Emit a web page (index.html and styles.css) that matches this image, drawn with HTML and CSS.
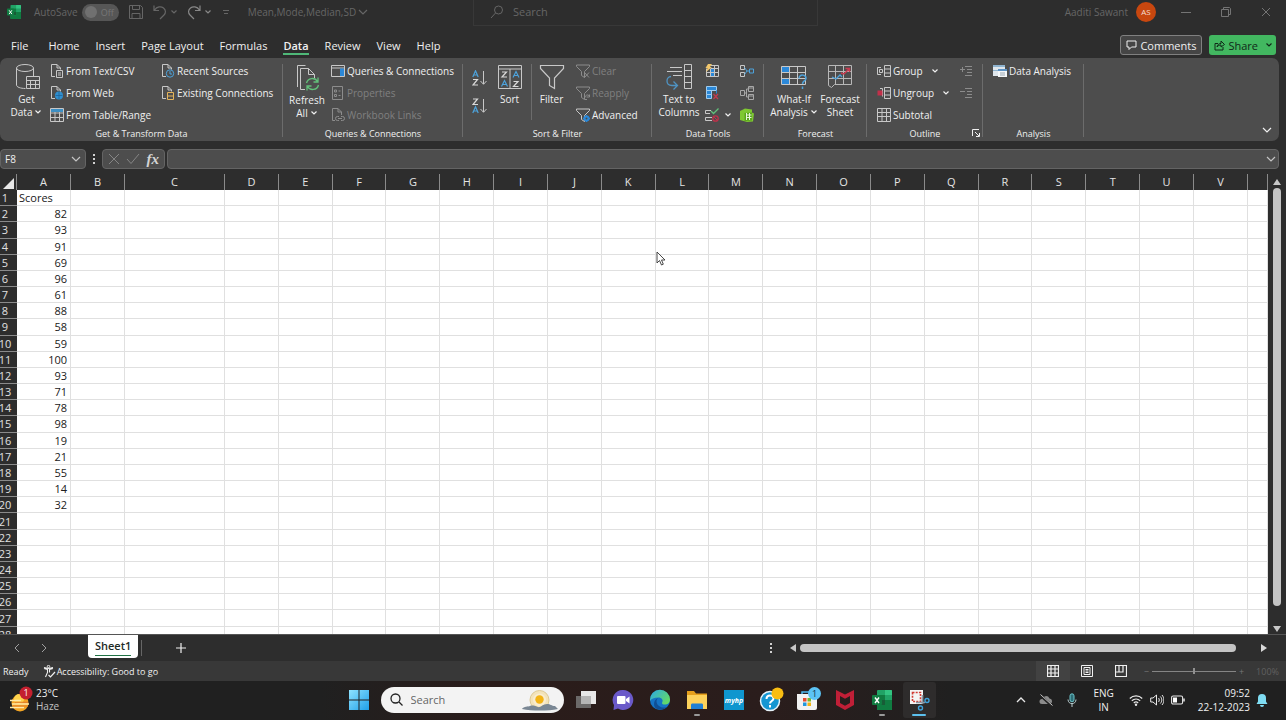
FILE: index.html
```html
<!DOCTYPE html>
<html lang="en">
<head>
<meta charset="utf-8">
<title>Mean,Mode,Median,SD - Excel</title>
<link rel="stylesheet" href="styles.css">
</head>
<body>
<svg class="defs" aria-hidden="true">
  <symbol id="chev" viewBox="0 0 8 8"><path d="M1.500 2.500 4 5l2.500-2.500" fill="none" stroke="currentColor" stroke-width="1.200"/></symbol>
  <symbol id="chev-lg" viewBox="0 0 10 10"><path d="M1 3l4 4 4-4" fill="none" stroke="currentColor" stroke-width="1.200"/></symbol>
  <symbol id="page" viewBox="0 0 14 14"><path d="M5 12.500H1.500v-12H7L10.500 4v1.500M7 .5V4h3.500" fill="none" stroke="#c8c8c8"/></symbol>
  <symbol id="funnel" viewBox="0 0 14 14"><path d="M.5 1h13v1.500L8.500 7.500v6l-3-2v-4L.5 2.500z" fill="none" stroke="currentColor"/></symbol>
  <symbol id="excel" viewBox="0 0 20 20"><path d="M6 0h13a1 1 0 0 1 1 1v18a1 1 0 0 1-1 1H6a1 1 0 0 1-1-1V1a1 1 0 0 1 1-1z" fill="#21a366"/><path d="M5 5h8v5H5z" fill="#107c41"/><path d="M13 0h6a1 1 0 0 1 1 1v4h-7z" fill="#33c481"/><path d="M5 10h8v5H5z" fill="#185c37"/><path d="M13 10h7v5h-7zM5 15h15v4a1 1 0 0 1-1 1H6a1 1 0 0 1-1-1z" fill="#107c41"/><rect y="5" width="10" height="10" rx="1" fill="#107c41"/><path d="M3 7.500l4 5.500M7 7.500L3 13" stroke="#fff" stroke-width="1.400"/></symbol>
</svg>

<header class="titlebar">
  <svg class="app-icon" viewBox="0 0 20 20"><use href="#excel"/></svg>
  <label class="autosave">AutoSave <input type="checkbox"><span class="switch">Off</span></label>
  <div class="quick">
    <button aria-label="Save"><svg width="16" height="16" viewBox="0 0 16 16"><path d="M1.500 1.500h11l2 2v11h-13zM4.500 1.500v4h7v-4M4 14.500V9.500h8v5" fill="none" stroke="currentColor"/></svg></button>
    <button aria-label="Undo"><svg width="16" height="16" viewBox="0 0 16 16"><path d="M2 1.500v5h5M2.500 6C5 2.500 9 2 11.500 4s2.500 5 .5 7l-4 4" fill="none" stroke="currentColor" stroke-width="1.200"/></svg><svg width="8" height="8"><use href="#chev"/></svg></button>
    <button class="redo" aria-label="Redo"><svg width="16" height="16" viewBox="0 0 16 16"><path d="M14 1.500v5H9M13.500 6C11 2.500 7 2 4.500 4s-2.500 5-.5 7l4 4" fill="none" stroke="currentColor" stroke-width="1.200"/></svg><svg width="8" height="8"><use href="#chev"/></svg></button>
    <button class="customize" aria-label="Customize"><svg width="8" height="8" viewBox="0 0 8 8"><path d="M1 2.500h6M2 5.500h4" stroke="currentColor"/></svg></button>
  </div>
  <button class="docname">Mean,Mode,Median,SD<svg width="10" height="10"><use href="#chev-lg"/></svg></button>
  <label class="title-search">
    <svg width="14" height="14" viewBox="0 0 14 14"><circle cx="8.500" cy="5" r="4" fill="none" stroke="currentColor"/><path d="M5.500 8L1 13" stroke="currentColor"/></svg>
    <input type="text" placeholder="Search" aria-label="Search">
  </label>
  <div class="account"><span>Aaditi Sawant</span><span class="avatar">AS</span></div>
  <div class="winbtns">
    <button aria-label="Minimize"><svg width="12" height="12" viewBox="0 0 12 12"><path d="M1 6.500h10" stroke="currentColor"/></svg></button>
    <button aria-label="Restore"><svg width="12" height="12" viewBox="0 0 12 12"><path d="M1.500 3.500h7v7h-7zM3.500 3.500v-2h6l1 1v6h-2" fill="none" stroke="currentColor"/></svg></button>
    <button aria-label="Close"><svg width="12" height="12" viewBox="0 0 12 12"><path d="M2 2l8 8M10 2l-8 8" stroke="currentColor"/></svg></button>
  </div>
</header>

<nav class="tabs">
  <a class="file" href="#">File</a><a href="#">Home</a><a href="#">Insert</a><a href="#">Page Layout</a><a href="#">Formulas</a><a class="active" href="#">Data</a><a href="#">Review</a><a href="#">View</a><a href="#">Help</a>
  <div class="tab-actions">
    <button class="comments"><svg width="11" height="11" viewBox="0 0 11 11"><path d="M1 1h9v6H5.500L3 9.500V7H1z" fill="none" stroke="currentColor"/></svg>Comments</button>
    <button class="share"><svg width="11" height="11" viewBox="0 0 11 11"><path d="M4 3.500H1v6.500h8V7M3 7c.5-2.500 2-3.500 4-3.500V1l3.500 3.500L7 7V5C5.500 5 4 5.500 3 7z" fill="none" stroke="currentColor"/></svg>Share<svg width="8" height="8"><use href="#chev"/></svg></button>
  </div>
</nav>

<section class="ribbon" aria-label="Data ribbon">
  <div class="group g-get">
    <div class="tools">
      <button class="big"><svg width="26" height="26" viewBox="0 0 26 26"><g fill="none" stroke="#c8c8c8"><ellipse cx="11" cy="4" rx="8.500" ry="3.500"/><path d="M2.500 4v17c0 2 4 3.500 9 3.500M19.500 4v8"/><path d="M12.500 12.500h13v12h-13zM12.500 16.500h13M12.500 20.500h13M16.500 16.500v8M21.500 16.500v8"/></g></svg><span>Get<br>Data<svg width="8" height="8"><use href="#chev"/></svg></span></button>
      <div class="stack">
        <button><svg width="14" height="14" viewBox="0 0 14 14"><use href="#page"/><path d="M6.500 6.500h6v7h-6zM8 9h3M8 11h3" fill="#4d4d4d" stroke="#c8c8c8"/></svg>From Text/CSV</button>
        <button><svg width="14" height="14" viewBox="0 0 14 14"><use href="#page"/><circle cx="9" cy="9.500" r="4" fill="#2f8fd0"/><path d="M5.500 9.500h7M9 6v7" stroke="#1d5f92" stroke-width=".7"/></svg>From Web</button>
        <button><svg width="14" height="14" viewBox="0 0 14 14"><path d="M.5.5h13v13H.5zM.5 5h13M.5 9.500h13M5 4v9.500M9.500 4v9.500" fill="none" stroke="#c8c8c8"/><path d="M1 1h12v3H1z" fill="#3d8fc4"/></svg>From Table/Range</button>
      </div>
      <div class="stack">
        <button><svg width="14" height="14" viewBox="0 0 14 14"><use href="#page"/><circle cx="9" cy="9.500" r="3.700" fill="#4d4d4d" stroke="#4da3dc"/><path d="M9 7v3h2" fill="none" stroke="#4da3dc"/></svg>Recent Sources</button>
        <button><svg width="14" height="14" viewBox="0 0 14 14"><use href="#page"/><path d="M6.500 6.500h6v7h-6zM6.500 10h6" fill="#4d4d4d" stroke="#e5b45b"/></svg>Existing Connections</button>
      </div>
    </div>
    <h2>Get &amp; Transform Data</h2>
  </div>

  <div class="group g-query">
    <div class="tools">
      <button class="big"><svg width="26" height="26" viewBox="0 0 26 26"><path d="M3.500 22V.5h8M6.500 24.500v-21h8l6 6V13M14.500 3.500v6h6M6.500 24.500H11" fill="none" stroke="#c8c8c8"/><path d="M12.500 18a6 6 0 0 1 11-1.500M24.500 20a6 6 0 0 1-11 1.500M24 12.500v4.500h-4.500M13 25.500V21h4.500" fill="none" stroke="#62c07a" stroke-width="1.300"/></svg><span>Refresh<br>All<svg width="8" height="8"><use href="#chev"/></svg></span></button>
      <div class="stack">
        <button><svg width="14" height="14" viewBox="0 0 14 14"><path d="M.5 1.500h13v11H.5zM.5 4h13" fill="none" stroke="#c8c8c8"/><path d="M9 4.500h4V12H9z" fill="#2b88d8"/></svg>Queries &amp; Connections</button>
        <button disabled><svg width="14" height="14" viewBox="0 0 14 14"><path d="M1.500.5h10v13h-10zM3.500 4h2v2h-2zM3.500 8.500h2v2h-2zM7.500 5h2M7.500 9.500h2" fill="none" stroke="currentColor"/></svg>Properties</button>
        <button disabled><svg width="14" height="14" viewBox="0 0 14 14"><path d="M4 12.500H1.500v-12H7L10.500 4v3M7 .5V4h3.500M8 8.500H6.500a2 2 0 0 0 0 4H8M10 8.500h1.500a2 2 0 0 1 0 4H10M7 10.500h4" fill="none" stroke="currentColor"/></svg>Workbook Links</button>
      </div>
    </div>
    <h2>Queries &amp; Connections</h2>
  </div>

  <div class="group g-sort">
    <div class="tools">
      <div class="stack az">
        <button aria-label="Sort A to Z"><svg width="16" height="16" viewBox="0 0 16 16"><path d="M.8 7L3.500.8 6.200 7M1.800 5h3.400" fill="none" stroke="#4da3dc" stroke-width="1.200"/><path d="M1 9.500h4.500L1 15h5" fill="none" stroke="#d8d8d8" stroke-width="1.200"/><path d="M11.500 1v13M8.500 11l3 3.300 3-3.300" fill="none" stroke="#c8c8c8"/></svg></button>
        <button aria-label="Sort Z to A"><svg width="16" height="16" viewBox="0 0 16 16"><path d="M1 1h4.500L1 6.500h5" fill="none" stroke="#d8d8d8" stroke-width="1.200"/><path d="M.8 15L3.500 8.800 6.200 15M1.800 13h3.400" fill="none" stroke="#4da3dc" stroke-width="1.200"/><path d="M11.500 1v13M8.500 11l3 3.300 3-3.300" fill="none" stroke="#c8c8c8"/></svg></button>
      </div>
      <button class="big"><svg width="26" height="26" viewBox="0 0 26 26"><path d="M1.500 1.500h23v23h-23zM1.500 5h23M13 5v19.500" fill="none" stroke="#c8c8c8"/><path d="M5 8h4.500L5 13h5M16.500 17.500h4.500l-4.500 5h5" fill="none" stroke="#d8d8d8" stroke-width="1.200"/><path d="M4.500 22.500l3-6 3 6M5.500 20.500h4M16 13.500l3-6 3 6M17 11.500h4" fill="none" stroke="#4da3dc" stroke-width="1.200"/></svg><span>Sort</span></button>
      <button class="big filter"><svg width="26" height="26" viewBox="0 0 26 26"><path d="M1.500 1.500h23v3L15.500 14v10.500l-5-3V14l-9-9.500z" fill="none" stroke="#c8c8c8" stroke-width="1.200"/></svg><span>Filter</span></button>
      <div class="stack">
        <button disabled><svg width="14" height="14" viewBox="0 0 14 14"><use href="#funnel"/><path d="M8.500 8.500l4.500 5M13 8.500l-4.500 5" stroke="currentColor"/></svg>Clear</button>
        <button disabled><svg width="14" height="14" viewBox="0 0 14 14"><use href="#funnel"/><path d="M13.500 8.500V11h-3M9 11.500A2.500 2.500 0 0 1 13 9.500M9 13.500h2" fill="none" stroke="currentColor"/></svg>Reapply</button>
        <button><svg class="lit" width="14" height="14" viewBox="0 0 14 14"><use href="#funnel"/><circle cx="10.500" cy="10.500" r="3" fill="#2b88d8"/><circle cx="10.500" cy="10.500" r="1" fill="#4d4d4d"/><path d="M10.500 7v1.500M10.500 12.500V14M7 10.500h1.500M12.500 10.500H14" stroke="#2b88d8" stroke-width="1.400"/></svg>Advanced</button>
      </div>
    </div>
    <h2>Sort &amp; Filter</h2>
  </div>

  <div class="group g-tools">
    <div class="tools">
      <button class="big"><svg width="28" height="26" viewBox="0 0 28 26"><path d="M19.500.5h7v24h-7zM19.500 6.500h7M19.500 12.500h7M19.500 18.500h7M5 3.500h12M2 7.500h15M8 11.500h9" fill="none" stroke="#c8c8c8"/><path d="M6 12.500c-5 0-6 9 1 9h5M8.500 17.500l4 4-4 4" fill="none" stroke="#4f93c2" stroke-width="1.300"/></svg><span>Text to<br>Columns</span></button>
      <div class="stack">
        <button aria-label="Flash Fill"><svg width="14" height="14" viewBox="0 0 14 14"><path d="M1.500 4.500v8h12v-11H6M1.500 8.500h12M5.500 4.500h8M5.500 5v7.500M9.500 1.500v11" fill="none" stroke="#c8c8c8"/><path d="M6 5h3v3H6zM6 9h3v3H6z" fill="#2b88d8"/><path d="M3 0h4L5 3h2L1 8l1.500-4H.5z" fill="#f0c66c"/></svg></button>
        <button aria-label="Remove Duplicates"><svg width="14" height="14" viewBox="0 0 14 14"><path d="M1.500.5h10v4h-10zM1.500 4.500h5v4h-5zM1.500 8.500h5v4h-5z" fill="#2b88d8" stroke="#9fcdf0"/><path d="M11.500 4.500v3" stroke="#2b88d8"/><path d="M8.500 8l4.500 5M13 8l-4.500 5" stroke="#c23a4e" stroke-width="1.300"/></svg></button>
        <button aria-label="Data Validation"><svg width="14" height="14" viewBox="0 0 14 14"><path d="M6 2.500H.5v3H5M7 9.500H.5v3H7" fill="none" stroke="#c8c8c8"/><path d="M6 3l2.500 2.500L13.500.5" fill="none" stroke="#62c07a" stroke-width="1.300"/><circle cx="10.500" cy="10.500" r="2.700" fill="none" stroke="#c2304a" stroke-width="1.300"/><path d="M8.700 8.700l3.600 3.600" stroke="#c2304a"/></svg><svg class="near-chev" width="8" height="8"><use href="#chev"/></svg></button>
      </div>
      <div class="stack">
        <button aria-label="Consolidate"><svg width="14" height="14" viewBox="0 0 14 14"><path d="M.5 1.500h4v4h-4zM.5 8.500h4v4h-4z" fill="none" stroke="#c8c8c8"/><path d="M4.500 3.500L7 7l-2.500 3.500M7 7h2.500" fill="none" stroke="#4da3dc"/><path d="M9.500 5h4v4h-4z" fill="none" stroke="#4da3dc"/></svg></button>
        <button aria-label="Relationships"><svg width="14" height="14" viewBox="0 0 14 14"><path d="M.5 4.500h4v5h-4zM8.500.5h5v5h-5zM8.500 8.500h5v5h-5zM4.500 7h2M6.500 3v8M6.500 3h2M6.500 11h2M8.500 2h5M8.500 10h5" fill="none" stroke="#a8a8a8"/></svg></button>
        <button aria-label="Manage Data Model"><svg width="14" height="14" viewBox="0 0 14 14"><path d="M0 3L5 .5l7 1v3l2 1-1 8-6 .5-7-2z" fill="#7fc832"/><path d="M4.500 5l7.500-.5v8L4.500 13z" fill="#5aa51e"/><path d="M6.500 5v7M6.500 7h5M6.500 9.500h5M9.500 5v7" stroke="#e8f6dc"/></svg></button>
      </div>
    </div>
    <h2>Data Tools</h2>
  </div>

  <div class="group g-forecast">
    <div class="tools">
      <button class="big"><svg width="26" height="26" viewBox="0 0 26 26"><path d="M.5 2.500h24v18H.5z" fill="none" stroke="#c8c8c8"/><path d="M1 3h7.500v5.500H1zM1 14.500h7.500V20H1z" fill="#2b88d8"/><path d="M.5 8.500h24M.5 14.500h24M8.500 2.500v18M16.500 2.500v18" stroke="#c8c8c8"/><path d="M18 14.500c0-5 7.500-4 7 0-.3 2.500-3.500 2.500-3.500 5.500M21.500 22.500V25" fill="none" stroke="#4da3dc" stroke-width="1.500"/></svg><span>What-If<br>Analysis<svg width="8" height="8"><use href="#chev"/></svg></span></button>
      <button class="big"><svg width="26" height="26" viewBox="0 0 26 26"><path d="M1.500 1.500h23v19h-17l-3 3-3-2zM1.500 7.500h23M1.500 14.500h23M8.500 1.500v19M16.500 1.500v19" fill="none" stroke="#b8b8b8"/><path d="M5 13l4 2 4-4 2 2" fill="none" stroke="#4da3dc" stroke-width="1.300"/><path d="M14 9l3 1 5-5M18.500 4.500H22.500V8" fill="none" stroke="#c93a50" stroke-width="1.500"/></svg><span>Forecast<br>Sheet</span></button>
    </div>
    <h2>Forecast</h2>
  </div>

  <div class="group g-outline">
    <div class="tools">
      <div class="stack">
        <button><svg width="14" height="14" viewBox="0 0 14 14"><path d="M7.500 1.500h6v11h-6zM7.500 5h6M7.500 9h6M4 3.500H.5v7H4M2.500 5.500h3v3h-3z" fill="none" stroke="#c8c8c8"/></svg>Group<svg class="gap-chev" width="8" height="8"><use href="#chev"/></svg></button>
        <button><svg width="14" height="14" viewBox="0 0 14 14"><path d="M7.500 1.500h6v11h-6zM7.500 5h6M7.500 9h6M3 2.500h2.500v8" fill="none" stroke="#c8c8c8"/><path d="M.5 4.500h5v5h-5z" fill="#c2304a"/></svg>Ungroup<svg class="gap-chev" width="8" height="8"><use href="#chev"/></svg></button>
        <button><svg width="14" height="14" viewBox="0 0 14 14"><path d="M.5.5h13v13H.5zM.5 4.500h13M.5 8.500h13M5 .5v13M9.500.5v13" fill="none" stroke="#c8c8c8"/></svg>Subtotal</button>
      </div>
      <div class="stack details">
        <button disabled aria-label="Show Detail"><svg width="12" height="12" viewBox="0 0 12 12"><path d="M5 1.500h7M7 4.500h5M7 7.500h5M5 10.500h7M0 4.500h5M2.500 2v5" stroke="currentColor"/></svg></button>
        <button disabled aria-label="Hide Detail"><svg width="12" height="12" viewBox="0 0 12 12"><path d="M5 1.500h7M7 4.500h5M7 7.500h5M5 10.500h7M0 4.500h5" stroke="currentColor"/></svg></button>
      </div>
    </div>
    <h2>Outline</h2>
    <button class="launcher" aria-label="Outline settings"><svg width="8" height="8" viewBox="0 0 8 8"><path d="M.5 7V.5H7M3 3l4 4M7.500 4v3.500H4" fill="none" stroke="currentColor"/></svg></button>
  </div>

  <div class="group g-analysis">
    <div class="tools"><div class="stack">
      <button><svg width="14" height="14" viewBox="0 0 14 14"><path d="M0 1h12v11H0z" fill="#dfe6ec"/><path d="M0 1h12v2H0zM0 6h5v1H0z" fill="#8eb3cf"/><path d="M5 5h9v8H5z" fill="#f4f6f8"/><path d="M5 5h9v2H5z" fill="#5b92c4"/><path d="M7 9h5M7 11h5" stroke="#9aa8b4"/></svg>Data Analysis</button>
    </div></div>
    <h2>Analysis</h2>
  </div>
  <button class="collapse" aria-label="Collapse ribbon"><svg width="10" height="10"><use href="#chev-lg"/></svg></button>
</section>

<div class="formula-row">
  <label class="namebox"><input type="text" value="F8" aria-label="Name box"><svg width="10" height="10"><use href="#chev-lg"/></svg></label>
  <svg class="dots" width="4" height="12" viewBox="0 0 4 12"><path d="M1 1h2v2H1zM1 5h2v2H1zM1 9h2v2H1z" fill="#d0d0d0"/></svg>
  <div class="fx">
    <button disabled aria-label="Cancel"><svg width="12" height="12" viewBox="0 0 12 12"><path d="M1 1l10 10M11 1L1 11" stroke="currentColor"/></svg></button>
    <button disabled aria-label="Enter"><svg width="14" height="12" viewBox="0 0 14 12"><path d="M1 6l4 4.500L13 1" fill="none" stroke="currentColor"/></svg></button>
    <button class="fn">fx</button>
  </div>
  <label class="formula"><input type="text" aria-label="Formula bar"><svg width="10" height="10"><use href="#chev-lg"/></svg></label>
</div>

<main class="sheet">
  <div class="viewport">
    <table>
      <colgroup id="cols"></colgroup>
      <thead><tr id="head"></tr></thead>
      <tbody id="rows"></tbody>
    </table>
  </div>
  <div class="vscroll">
    <svg width="10" height="10" viewBox="0 0 10 10"><path d="M5 2l4 6H1z" fill="#c8c8c8"/></svg>
    <div class="thumb"></div>
    <svg width="10" height="10" viewBox="0 0 10 10"><path d="M5 8L1 2h8z" fill="#c8c8c8"/></svg>
  </div>
  <svg class="cursor" width="10" height="15" viewBox="0 0 10 15"><path d="M1 1v11l2.500-2.500L5.500 14l1.800-.8L5.500 9H9z" fill="#fff" stroke="#333" stroke-width=".9"/></svg>
</main>

<div class="sheetbar">
  <div class="sheet-nav">
    <button aria-label="Previous sheet"><svg width="10" height="10" viewBox="0 0 10 10"><path d="M7 1L3 5l4 4" fill="none" stroke="currentColor"/></svg></button>
    <button aria-label="Next sheet"><svg width="10" height="10" viewBox="0 0 10 10"><path d="M3 1l4 4-4 4" fill="none" stroke="currentColor"/></svg></button>
  </div>
  <button class="sheet-tab"><span>Sheet1</span></button>
  <button class="add" aria-label="New sheet"><svg width="10" height="10" viewBox="0 0 10 10"><path d="M0 5h10M5 0v10" stroke="currentColor" stroke-width="1.200"/></svg></button>
  <div class="hscroll">
    <svg class="dots" width="4" height="12" viewBox="0 0 4 12"><path d="M1 1h2v2H1zM1 5h2v2H1zM1 9h2v2H1z" fill="#d0d0d0"/></svg>
    <svg width="8" height="10" viewBox="0 0 8 10"><path d="M1 5l6-4v8z" fill="#c8c8c8"/></svg>
    <div class="thumb"></div>
    <svg width="8" height="10" viewBox="0 0 8 10"><path d="M7 5L1 1v8z" fill="#d8d8d8"/></svg>
  </div>
</div>

<div class="status">
  <span>Ready</span>
  <button class="access"><svg width="13" height="13" viewBox="0 0 13 13"><path d="M1 3.500l3.500 1v3L2.500 12M10 3.500l-3.500 1v3M1 2.500l4.500 1L10 2.500" fill="none" stroke="currentColor" stroke-width="1.100"/><circle cx="5.500" cy="1.500" r="1.200" fill="none" stroke="currentColor"/><path d="M5.500 10l2 2L12 7" fill="none" stroke="currentColor" stroke-width="1.200"/></svg>Accessibility: Good to go</button>
  <div class="views">
    <button class="on" aria-label="Normal"><svg width="12" height="12" viewBox="0 0 12 12"><path d="M.5.5h11v11H.5zM.5 4h11M.5 8h11M4 .5v11M8 .5v11" fill="none" stroke="currentColor" stroke-width="1.200"/></svg></button>
    <button aria-label="Page Layout"><svg width="12" height="12" viewBox="0 0 12 12"><path d="M.5.5h11v11H.5zM3 2.500h6v7H3zM4.500 4.500h3M4.500 6h3M4.500 7.500h3" fill="none" stroke="currentColor"/></svg></button>
    <button aria-label="Page Break"><svg width="12" height="12" viewBox="0 0 12 12"><path d="M.5.5h11v11H.5zM4 .5V7M8 .5V7H.5" fill="none" stroke="currentColor" stroke-width="1.200"/></svg></button>
  </div>
  <label class="zoom"><span>−</span><input type="range" min="0" max="100" value="50" aria-label="Zoom"><span>+</span></label>
  <span class="pct">100%</span>
</div>

<footer class="taskbar">
  <div class="side">
    <button class="weather">
      <svg width="25" height="28" viewBox="0 0 25 28"><circle cx="11" cy="17" r="8.500" fill="#f5a623"/><circle cx="10" cy="13" r="5" fill="#ffd34d"/><path d="M1 14.500h11M3 18h17M1 21.500h14" stroke="#ffe9a8" stroke-width="1.500"/><path d="M6 16.300h13M4 20h15" stroke="#e07a2a"/><circle cx="17" cy="7" r="6.500" fill="#c4202f"/><text x="17" y="10" text-anchor="middle">1</text></svg>
      <span>23°C<br><small>Haze</small></span>
    </button>
  </div>
  <div class="apps">
    <button class="start" aria-label="Start"><svg width="20" height="20" viewBox="0 0 20 20"><defs><linearGradient id="w" x2="1" y2="1"><stop stop-color="#8fe3ff"/><stop offset="1" stop-color="#1e9fe8"/></linearGradient></defs><path d="M0 0h9.500v9.500H0zM10.500 0H20v9.500h-9.500zM0 10.500h9.500V20H0zM10.500 10.500H20V20h-9.500z" fill="url(#w)"/></svg></button>
    <label class="task-search"><svg width="13" height="13" viewBox="0 0 13 13"><circle cx="5.500" cy="5.500" r="4.500" fill="none" stroke="#222" stroke-width="1.300"/><path d="M9 9l3.500 3.500" stroke="#222" stroke-width="1.300"/></svg><input type="text" placeholder="Search" aria-label="Search Windows"><svg width="38" height="22" viewBox="0 0 38 22"><circle cx="18.500" cy="11" r="9.500" fill="#f3e3ba" stroke="#ddc995"/><circle cx="18.500" cy="11" r="6.500" fill="#f8ecd0"/><circle cx="18.500" cy="10.500" r="4.200" fill="#f3b417"/><path d="M1 20c2-3 6-2 8-3s6 0 8 1 5-3 9-3 4 2 8 2l3 3c-10 2-26 2-36 0z" fill="#7a8794"/></svg></label>
    <button aria-label="Task View"><svg width="22" height="22" viewBox="0 0 22 22"><path d="M6 2h15v13H6z" fill="#e8e8e8"/><path d="M1 7h15v12H1z" fill="#777" opacity=".85"/><path d="M6 7h10v8H6z" fill="#b5b5b5"/></svg></button>
    <button aria-label="Chat"><svg width="22" height="22" viewBox="0 0 22 22"><path d="M11 1a10 10 0 1 1-5 18.500L1.500 21 2 16A10 10 0 0 1 11 1z" fill="#6a59c9"/><rect x="5" y="7" width="8.500" height="8" rx="1" fill="#fff"/><path d="M14 10l3.500-2.500v7L14 12z" fill="#fff"/></svg></button>
    <button aria-label="Edge"><svg width="22" height="22" viewBox="0 0 22 22"><defs><linearGradient id="e1" x2="1" y2=".6"><stop stop-color="#2aa8e8"/><stop offset="1" stop-color="#62d968"/></linearGradient></defs><circle cx="11" cy="11" r="10" fill="#1573c4"/><path d="M1 11A10 10 0 0 1 21 10.500c0 4-3 5.500-6.500 5-2-.5-1.500-2-1-3 .7-1.500-1-4-4-4C5 8.500 2 10 1 12z" fill="url(#e1)"/><path d="M7.500 12c0 5 5 7.500 10.500 6.300A10 10 0 0 1 7 19.500C3.500 16 5 10.500 9 9c-1 1-1.500 2-1.500 3z" fill="#0f4f95"/></svg></button>
    <button class="run" aria-label="File Explorer"><svg width="22" height="22" viewBox="0 0 22 22"><path d="M1 2h7l2 2.500h11V8H1z" fill="#e59f1c"/><path d="M1 6h20v14H1z" fill="#fcd15b"/><path d="M5 20v-4c0-1 .5-1.500 1.500-1.500h9c1 0 1.500.5 1.500 1.500v4z" fill="#1f7fd4"/></svg></button>
    <button aria-label="myHP"><svg width="22" height="22" viewBox="0 0 22 22"><path d="M1 1h20v20H1z" fill="#0f96cf"/><text class="hp" x="11" y="14" text-anchor="middle">myhp</text></svg></button>
    <button aria-label="HP Support"><svg width="26" height="26" viewBox="0 0 26 26"><circle cx="12" cy="14" r="9.500" fill="#1596d2" stroke="#e8f4fa" stroke-width="1.500"/><path d="M8.500 12c0-5 7-4.500 7-.5 0 2.500-3.500 2.500-3.500 5M12 18v2.500" fill="none" stroke="#fff" stroke-width="2"/><circle cx="19.500" cy="6.500" r="6" fill="#f9bd12"/></svg></button>
    <button aria-label="Microsoft Store"><svg width="26" height="26" viewBox="0 0 26 26"><path d="M7 7V5h8v2" fill="none" stroke="#4db8ee" stroke-width="1.500"/><path d="M2 7h20v14a2 2 0 0 1-2 2H4a2 2 0 0 1-2-2z" fill="#f2f2f2"/><path d="M8 11h3.500v3.500H8z" fill="#e8492d"/><path d="M12.500 11H16v3.500h-3.500z" fill="#74b52c"/><path d="M8 15.500h3.500V19H8z" fill="#2196dc"/><path d="M12.500 15.500H16V19h-3.500z" fill="#f2b311"/><circle cx="19.500" cy="6.500" r="6.500" fill="#5cc3f5"/><text class="badge" x="19.500" y="10" text-anchor="middle">1</text></svg></button>
    <button aria-label="McAfee"><svg width="22" height="22" viewBox="0 0 22 22"><path d="M2 1l9 4.500L20 1v15l-9 5-9-5zM6 7v7l5 2.800 5-2.800V7l-5 2.800z" fill="#c01f37" fill-rule="evenodd"/></svg></button>
    <button class="run" aria-label="Excel"><svg width="20" height="20"><use href="#excel"/></svg></button>
    <button class="active" aria-label="Snipping Tool"><svg width="22" height="22" viewBox="0 0 22 22"><path d="M2 1h13v14H2z" fill="#f4f4f4"/><path d="M4.500 3.500h8v9h-8z" fill="none" stroke="#d13c35" stroke-width="1.600" stroke-dasharray="2 1.200"/><path d="M14.500 6v9M8 13.500h9" stroke="#8b98a5" stroke-width="1.700"/><circle cx="12.500" cy="19" r="2" fill="none" stroke="#3fa3dd" stroke-width="1.400"/><circle cx="19" cy="11.500" r="2" fill="none" stroke="#3fa3dd" stroke-width="1.400"/></svg></button>
  </div>
  <div class="side tray">
    <button aria-label="Hidden icons"><svg width="10" height="10" viewBox="0 0 10 10"><path d="M1 7l4-4 4 4" fill="none" stroke="#e8e8e8" stroke-width="1.300"/></svg></button>
    <button aria-label="OneDrive"><svg width="14" height="14" viewBox="0 0 14 14"><path d="M3 11a2.500 2.500 0 0 1 0-5 4 4 0 0 1 7.500-.5A2.800 2.800 0 0 1 11 11z" fill="#8c8c8c"/><path d="M1 2l12 11" stroke="#222" stroke-width="2.500"/><path d="M1.500 1.500l12 11" stroke="#c8c8c8"/></svg></button>
    <button aria-label="Microphone"><svg width="12" height="14" viewBox="0 0 12 14"><rect x="4" y=".8" width="4" height="8" rx="2" fill="#2d6f77" stroke="#6fc5cc"/><path d="M2 6.500c0 5.500 8 5.500 8 0M6 10.500V14" fill="none" stroke="#b8cdd0"/></svg></button>
    <button class="lang">ENG<br>IN</button>
    <button class="net" aria-label="Network, sound and battery">
      <svg width="14" height="14" viewBox="0 0 14 14"><path d="M.8 5.500c3.500-3.500 9-3.500 12.400 0M2.800 7.800c2.500-2.400 6-2.400 8.400 0M4.800 10c1.300-1.200 3.100-1.200 4.400 0" fill="none" stroke="#e8e8e8" stroke-width="1.200"/><circle cx="7" cy="11.800" r="1.200" fill="#e8e8e8"/></svg>
      <svg width="14" height="14" viewBox="0 0 14 14"><path d="M.7 5v4H3l3.500 3V2L3 5zM8.500 5c1 1 1 3 0 4M10.300 3.500c2 2 2 5 0 7M12 2c2.500 3 2.500 7 0 10" fill="none" stroke="#e8e8e8"/></svg>
      <svg width="14" height="14" viewBox="0 0 14 14"><rect x=".6" y="3" width="11" height="8" rx="1.500" fill="none" stroke="#e8e8e8" stroke-width="1.100"/><path d="M2 4.500h4v5H2z" fill="#fff"/><path d="M13 5.500v3" stroke="#e8e8e8" stroke-width="1.500"/></svg>
    </button>
    <button class="clock">09:52<br>22-12-2023</button>
    <button class="bell" aria-label="Notifications"><svg width="12" height="14" viewBox="0 0 12 14"><path d="M6 1a4 4 0 0 1 4 4v3.500L11.500 11H.5L2 8.500V5a4 4 0 0 1 4-4zM4 12h4a2 2 0 0 1-4 0z" fill="#7fdcf2"/></svg></button>
  </div>
</footer>
<script src="sheet.js"></script>
</body>
</html>
```

FILE: styles.css
```css
* { box-sizing: border-box; }

body {
  margin: 0;
  height: 100vh;
  display: flex;
  flex-direction: column;
  overflow: hidden;
  background: #2d2d2d;
  color: #f0f0f0;
  font: 10px/13px "Open Sans", "Noto Sans", sans-serif;
}

button, input {
  margin: 0;
  padding: 0;
  border: 0;
  background: none;
  color: inherit;
  font: inherit;
}
button { display: flex; align-items: center; white-space: nowrap; }
svg { flex: none; display: block; }
.defs { position: absolute; width: 0; height: 0; }

/* Title bar */
.titlebar {
  position: relative;
  display: flex;
  align-items: center;
  height: 26px;
  padding: 0 14px 2px 7px;
  color: #666;
  flex: none;
}
.app-icon { width: 14px; height: 14px; margin-right: 13px; }
.autosave { display: flex; align-items: center; gap: 4px; }
.autosave input { position: absolute; opacity: 0; }
.switch {
  display: flex;
  align-items: center;
  width: 37px;
  height: 17px;
  border-radius: 9px;
  background: #565656;
  color: #767676;
  font-size: 9px;
}
.switch::before {
  content: "";
  width: 12px;
  height: 12px;
  margin: 0 4px 0 3px;
  border-radius: 50%;
  background: #707070;
}
.quick { display: flex; gap: 8px; margin-left: 9px; }
.quick button { gap: 2px; }
.quick .redo { color: #888; }
.quick .customize { margin-left: 2px; }
.docname { gap: 2px; margin-left: 18px; }
.title-search {
  position: absolute;
  left: 473px;
  right: 468px;
  top: 0;
  height: 26px;
  display: flex;
  align-items: center;
  gap: 9px;
  padding: 0 16px 2px;
  border: 1px solid #383838;
  border-top: 0;
}
.title-search input { flex: 1; min-width: 0; font-size: 11px; }
::placeholder { color: inherit; opacity: 1; }
.account { display: flex; align-items: center; gap: 8px; margin-left: auto; }
.avatar {
  width: 20px;
  height: 20px;
  border-radius: 50%;
  background: #c8470f;
  color: #f5ded2;
  font-size: 8px;
  line-height: 20px;
  text-align: center;
}
.winbtns { display: flex; gap: 28px; margin-left: 24px; color: #747474; }

/* Ribbon tabs */
.tabs {
  display: flex;
  align-items: center;
  gap: 16px;
  height: 32px;
  padding: 6px 10px 0 11px;
  font-size: 11px;
  flex: none;
}
.tabs a {
  color: inherit;
  text-decoration: none;
  line-height: 15px;
  border-bottom: 2px solid transparent;
  margin-top: 2px;
}
.tabs .file { margin-right: 4px; }
.tabs .active { font-weight: 600; border-color: #4fb878; }
.tab-actions { display: flex; gap: 7px; margin-left: auto; }
.tab-actions button { height: 20px; padding: 0 5px; gap: 3px; border-radius: 3px; }
.comments { border: 1px solid #808080; background: #454545; }
.tab-actions .share { background: #42b760; color: #102818; padding-right: 3px; }
.share svg:last-child { margin-left: 4px; }

/* Ribbon */
.ribbon {
  display: flex;
  margin-right: 7px;
  padding-top: 2px;
  border-radius: 7px;
  background: #4d4d4d;
  flex: none;
  position: relative;
}
.group {
  position: relative;
  display: flex;
  flex-direction: column;
  height: 81px;
}
.group::after {
  content: "";
  position: absolute;
  right: 0;
  top: 4px;
  bottom: 4px;
  border-right: 1px solid #6c6c6c;
}
.group h2 {
  margin: 0;
  font: inherit;
  font-size: 9px;
  text-align: center;
  line-height: 15px;
}
.tools { display: grid; height: 66px; }
.stack { display: grid; grid-template-rows: repeat(3, 22px); justify-items: start; }
.stack button { gap: 2px; }
.stack button:disabled { color: #808080; }
.lit { color: #c8c8c8; }
.stack button:disabled svg { color: #8c8c8c; }
.big {
  flex-direction: column;
  gap: 3px;
  padding-top: 4px;
  text-align: center;
}
.big span svg { display: inline-block; margin-left: 2px; }
.gap-chev { margin-left: 6px; }
.near-chev { margin-left: 3px; }
.g-get { width: 283px; }
.g-get .tools { grid-template-columns: 31px 111px 1fr; padding-left: 11px; }
.g-get .stack { padding-left: 8px; }
.g-query { width: 180px; }
.g-query .tools { grid-template-columns: 38px 1fr; gap: 5px; padding-left: 5px; }
.g-query .big { padding-top: 5px; }
.g-sort { width: 189px; }
.g-sort .tools { grid-template-columns: 18px 39px 45px 1fr; padding-left: 9px; }
.az { grid-template-rows: 28px 28px; padding-top: 4px; }
.filter { position: relative; }
.filter::before { content: ""; position: absolute; left: 2px; top: 4px; height: 56px; border-left: 1px solid #6c6c6c; }
.g-sort .big + .stack { padding-left: 2px; }
.g-tools { width: 112px; }
.g-tools .tools { grid-template-columns: 44px 35px 1fr; padding-left: 5px; }
.g-tools .stack { padding-left: 4px; }
.g-forecast { width: 103px; }
.g-forecast .tools { grid-template-columns: 48px 44px; padding-left: 6px; }
.g-outline { width: 116px; }
.g-outline .tools { grid-template-columns: 83px 1fr; padding-left: 10px; }
.details { color: #8c8c8c; }
.launcher { position: absolute; right: 3px; bottom: 4px; }
.g-analysis { width: 101px; }
.g-analysis .tools { padding-left: 10px; }
.collapse { margin: auto 7px 6px auto; }

/* Formula bar */
.formula-row {
  display: flex;
  align-items: center;
  padding: 8px 7px 5px 0;
  flex: none;
}
.formula-row label, .fx {
  display: flex;
  align-items: center;
  height: 20px;
  border: 1px solid #646464;
  border-radius: 4px;
  background: #4d4d4d;
}
.formula-row label svg { color: #c4c4c4; }
.formula-row input { flex: 1; min-width: 0; }
.namebox { width: 86px; padding: 0 4px; }
.dots { margin: 0 6px; }
.fx { width: 63px; padding: 0 5px; justify-content: space-between; margin-right: 2px; }
.fx button:disabled { color: #858585; }
.fx .fn { color: #d4d4d4; font: italic 700 15px/16px "Liberation Serif", serif; }
.formula { flex: 1; padding: 0 2px 0 6px; }

/* Worksheet grid */
.sheet {
  position: relative;
  flex: 1;
  min-height: 0;
  display: flex;
}
.viewport { flex: 1; overflow: hidden; background: #fff; }
table {
  width: 100%;
  height: 469px;
  table-layout: fixed;
  border-collapse: separate;
  border-spacing: 0;
  color: #202020;
}
th, td { padding: 0; line-height: 14px; overflow: hidden; white-space: nowrap; }
td { border-right: 1px solid #e0e0e0; border-bottom: 1px solid #e0e0e0; padding: 1px 3px 0 2px; font-size: 11px; text-align: right; }
td.label { text-align: left; }
thead th { height: 16px; background: #2d2d2d; color: #e4e4e4; font-size: 11px; font-weight: 400; border-right: 1px solid #8a8a8a; }
tbody th { background: #2d2d2d; color: #e0e0e0; font-size: 11px; font-weight: 400; border-bottom: 1px solid #8a8a8a; padding-top: 1px; }
tbody th span { display: flex; justify-content: center; width: 10px; }
thead th svg { margin: 2px 0 0 3px; }
.col-row { width: 17px; }
.col-std { width: 54px; }
.col-wide { width: 100px; }
.col-cut { width: 20px; }
.vscroll {
  width: 18px;
  display: flex;
  flex-direction: column;
  align-items: center;
  padding-top: 3px;
}
.thumb { border-radius: 4px; background: #c4c4c4; }
.vscroll .thumb { flex: 1; width: 8px; margin: 1px 0 18px; }
.cursor { position: absolute; left: 656px; top: 77px; }

/* Sheet tabs and horizontal scroll */
.sheetbar {
  display: flex;
  height: 27px;
  padding-bottom: 1px;
  border-top: 1px solid #555;
  flex: none;
}
.sheet-nav { display: flex; gap: 17px; width: 88px; padding-left: 12px; color: #a0a0a0; }
.sheet-tab {
  height: 23px;
  padding: 0 7px;
  border-radius: 0 0 4px 4px;
  background: #fff;
  color: #1d2a26;
  font-size: 11px;
  font-weight: 600;
}
.sheet-tab span { border-bottom: 1px solid #217346; line-height: 18px; }
.add { margin-left: 3px; padding-left: 35px; }
.add::before { content: ""; height: 16px; border-left: 1px solid #666; margin-left: -35px; margin-right: 34px; }
.hscroll { width: 506px; margin-left: auto; margin-right: 18px; display: flex; align-items: center; }
.hscroll .dots { margin: 0 16px 0 7px; }
.hscroll .thumb { flex: 1; height: 8px; margin: 0 24px 0 3px; }

/* Status bar */
.status {
  display: flex;
  align-items: center;
  height: 20px;
  padding: 0 7px 0 3px;
  background: #383838;
  font-size: 9px;
  flex: none;
}
.access { gap: 1px; margin-left: 14px; }
.views { display: flex; align-self: stretch; margin-left: auto; }
.views button { width: 34px; justify-content: center; }
.views .on { background: #424242; }
.zoom { display: flex; align-items: center; gap: 3px; color: #777; margin-left: 6px; }
.zoom input { appearance: none; width: 84px; height: 1px; background: #858585; }
.zoom input::-webkit-slider-thumb { appearance: none; width: 2px; height: 6px; background: #909090; }
.pct { margin-left: 12px; color: #606060; }

/* Windows taskbar */
.taskbar {
  display: flex;
  height: 39px;
  padding-bottom: 2px;
  flex: none;
  background: linear-gradient(90deg, #202020 25%, #2a1c1a 38%, #2a1d1c 60%, #202020 74%);
}
.side { flex: 1 0 0; display: flex; align-items: center; }
.weather { gap: 2px; padding-left: 9px; text-align: left; line-height: 13px; }
.weather svg text { fill: #fff; font-size: 9px; }
.weather small { font-size: 10px; color: #c0c0c0; }
.apps { display: flex; align-items: center; }
.apps button {
  position: relative;
  width: 37px;
  height: 36px;
  justify-content: center;
}
.apps .start { width: 20px; margin-right: 12px; }
.task-search {
  display: flex;
  align-items: center;
  width: 183px;
  height: 26px;
  margin-right: 4px;
  padding: 0 5px 0 9px;
  border-radius: 13px;
  background: #f3f3f3;
  color: #666;
}
.task-search input { flex: 1; min-width: 0; margin-left: 8px; font-size: 11px; }
.hp { fill: #fff; font: italic 700 7px "Open Sans", sans-serif; }
.badge { fill: #10344a; font-size: 9px; }
.run::after, .apps .active::after {
  content: "";
  position: absolute;
  bottom: 2px;
  width: 6px;
  height: 2px;
  border-radius: 1px;
  background: #9a9a9a;
}
.apps .active { background: #2e2c2c; width: 33px; margin: 0 2px; border-radius: 3px; }
.apps .active::after { width: 14px; background: #5cc0ee; }
.tray { justify-content: flex-end; gap: 13px; }
.lang { text-align: center; line-height: 14px; }
.net { gap: 7px; }
.net, .lang { margin-left: 2px; }
.clock { text-align: right; line-height: 14px; }
.bell { margin: 0 18px 0 -7px; }
```

FILE: sheet.js
```javascript
const letters = "ABCDEFGHIJKLMNOPQRSTUV".split("");
const scores = [82, 93, 91, 69, 96, 61, 88, 58, 59, 100, 93, 71, 78, 98, 19, 21, 55, 14, 32];
const colClasses = ["col-row", "col-std", "col-std", "col-wide", ...Array(19).fill(""), "col-cut"];

document.getElementById("cols").innerHTML =
  colClasses.map(c => `<col class="${c}">`).join("");

const corner = '<th><svg width="12" height="11" viewBox="0 0 12 11"><path d="M11 0v11H0z" fill="#e8e8e8"/></svg></th>';
document.getElementById("head").innerHTML =
  corner + letters.map(l => `<th scope="col">${l}</th>`).join("") + "<th></th>";

let html = "";
for (let r = 1; r <= 28; r++) {
  const first = r === 1 ? '<td class="label">Scores</td>' : `<td>${scores[r - 2] ?? ""}</td>`;
  html += `<tr><th scope="row"><span>${r}</span></th>${first}${"<td></td>".repeat(22)}</tr>`;
}
document.getElementById("rows").innerHTML = html;
```
